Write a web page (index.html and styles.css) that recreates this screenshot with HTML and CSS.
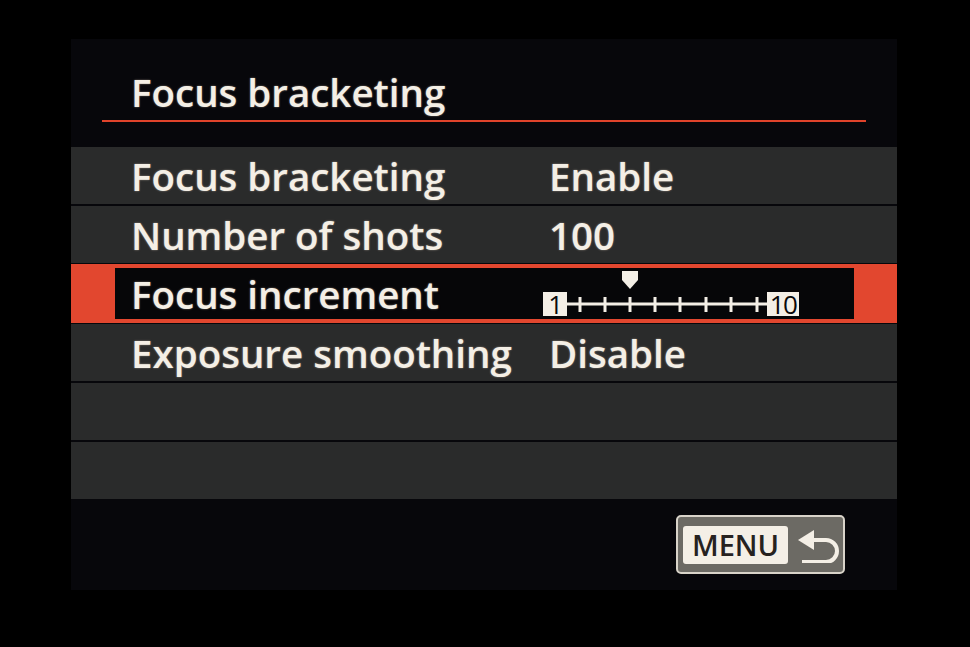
FILE: index.html
```html
<!DOCTYPE html>
<html>
<head>
    <title>Focus bracketing</title>
    <link rel="stylesheet" href="styles.css">
</head>
<body>
    <!-- camera LCD menu page -->
    <div class="screen">
        <div class="menu-title">
            <h1>Focus bracketing</h1>
        </div>

        <div class="menu-list">
            <div class="menu-row">
                <span class="label">Focus bracketing</span>
                <span class="value">Enable</span>
            </div>
            <div class="menu-row">
                <span class="label">Number of shots</span>
                <span class="value">100</span>
            </div>
            <div class="menu-row selected">
                <div class="row-inner">
                    <span class="label">Focus increment</span>
                    <!-- increment scale 1..10, marker on 3 -->
                    <div class="scale">
                        <span class="scale-end">1</span>
                        <svg class="scale-track" width="200" height="51" viewBox="0 0 200 51">
                            <path d="M55 3 H71 V12 L63 21 L55 12 Z" fill="#f4efe6"/>
                            <line x1="0" y1="36" x2="200" y2="36" stroke="#f4efe6" stroke-width="3"/>
                            <g stroke="#f4efe6" stroke-width="3">
                                <line x1="13" y1="29" x2="13" y2="44"/>
                                <line x1="38" y1="29" x2="38" y2="44"/>
                                <line x1="63" y1="29" x2="63" y2="44"/>
                                <line x1="88" y1="29" x2="88" y2="44"/>
                                <line x1="113" y1="29" x2="113" y2="44"/>
                                <line x1="139" y1="29" x2="139" y2="44"/>
                                <line x1="164" y1="29" x2="164" y2="44"/>
                                <line x1="190" y1="29" x2="190" y2="44"/>
                            </g>
                        </svg>
                        <span class="scale-end wide">10</span>
                    </div>
                </div>
            </div>
            <div class="menu-row">
                <span class="label">Exposure smoothing</span>
                <span class="value">Disable</span>
            </div>
            <div class="menu-row"></div>
            <div class="menu-row"></div>
        </div>

        <div class="menu-footer">
            <div class="menu-btn">
                <span class="menu-key">MENU</span>
                <svg class="back-icon" width="46" height="36" viewBox="0 0 46 36">
                    <path d="M2 13 L18 3 V23 Z" fill="#f4efe6"/>
                    <path d="M16 13 H30 A11 11 0 0 1 30 35 H6" fill="none" stroke="#f4efe6" stroke-width="4"/>
                </svg>
            </div>
        </div>
    </div>
</body>
</html>
```

FILE: styles.css
```css
/* page */
body {
    margin: 0;
    background: #000;
    font-family: "Open Sans", "Noto Sans", sans-serif;
    color: #f4efe6;
}

/* LCD area */
.screen {
    width: 826px;
    height: 551px;
    margin: 39px 0 0 71px;
    background: #07070b;
    display: flex;
    flex-direction: column;
}

/* title with red rule */
.menu-title {
    height: 108px;
    padding: 0 31px;
    box-sizing: border-box;
}
.menu-title h1 {
    margin: 0;
    height: 81px;
    padding-left: 29px;
    border-bottom: 2px solid #e0432b;
    font-size: 38.5px;
    font-weight: 560;
    line-height: 106px;
    overflow: hidden;
    text-shadow: 0 0 2px rgba(255, 240, 220, 0.5);
}

/* rows */
.menu-list {
    display: flex;
    flex-direction: column;
    gap: 2px;
}
.menu-row {
    height: 57px;
    background: #2a2b2b;
    display: flex;
    align-items: center;
    padding-left: 60px;
    font-size: 38.5px;
    font-weight: 560;
    text-shadow: 0 0 2px rgba(255, 240, 220, 0.5);
}
.label {
    width: 418px;
    flex-shrink: 0;
    white-space: nowrap;
}

/* highlighted row */
.menu-row.selected {
    background: #e2472f;
    padding: 4px 43px 4px 44px;
    height: 59px;
    box-sizing: border-box;
    margin: -1px 0;
}
.row-inner {
    flex: 1;
    align-self: stretch;
    background: #060608;
    display: flex;
    align-items: center;
    padding-left: 16px;
}

/* 1..10 scale */
.scale {
    display: flex;
    align-items: flex-start;
    height: 51px;
    margin-left: -6px;
}
.scale-end {
    margin-top: 24px;
    width: 24px;
    height: 24px;
    background: #f4efe6;
    color: #0a0a0a;
    font-size: 26px;
    font-weight: 500;
    line-height: 24px;
    text-align: center;
    letter-spacing: -1.5px;
    text-shadow: none;
}
.scale-end.wide {
    width: 32px;
}

/* bottom button */
.menu-footer {
    display: flex;
    justify-content: flex-end;
    padding: 16px 52px 0 0;
}
.menu-btn {
    width: 169px;
    height: 59px;
    box-sizing: border-box;
    background: #6c6a64;
    border: 2px solid #d9d4ca;
    border-radius: 5px;
    display: flex;
    align-items: center;
    padding-left: 5px;
    gap: 8px;
}
.menu-key {
    width: 105px;
    height: 38px;
    background: #f4efe6;
    border-radius: 3px;
    color: #26221f;
    font-size: 29px;
    font-weight: 560;
    line-height: 38px;
    text-align: center;
}
```
